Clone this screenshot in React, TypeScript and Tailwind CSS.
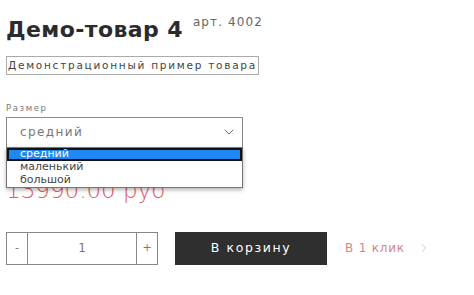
import { ChevronDown, ChevronRight } from 'lucide-react'

const SIZES = ['средний', 'маленький', 'большой']

export default function App() {
  return (
    <div className="w-[474px] h-[295px] bg-white overflow-hidden font-['DejaVu_Sans',sans-serif] text-[#333]">
      <div className="px-[6px] pt-[19px]">
        {/* Title */}
        <div className="flex items-start">
          <h1 className="text-[22px] leading-none font-bold tracking-[0.4px] text-[#2b2b2b]">Демо-товар 4</h1>
          <span className="ml-[10px] -mt-[3px] text-[12px] leading-none tracking-[1.1px] text-[#666]">арт. 4002</span>
        </div>

        <div className="mt-[15px] inline-block border border-[#aaa] px-[1px] py-[3px] text-[10.5px] leading-none tracking-[1.75px] text-[#444]">
          Демонстрационный пример товара
        </div>

        {/* Size select */}
        <div className="mt-[28px] text-[8.5px] leading-none tracking-[1.6px] text-[#777]">Размер</div>
        <div className="relative mt-[4px] w-[237px]">
          <div className="h-[31px] border border-[#888] flex items-center pl-[13px] pr-[5px]">
            <span className="text-[12px] tracking-[1.4px] text-[#777]">средний</span>
            <ChevronDown size={16} strokeWidth={1.3} className="ml-auto text-[#555]" />
          </div>
          <div className="absolute left-0 top-[30px] w-[237px] bg-white border border-[#777] shadow-[0_2px_4px_rgba(0,0,0,0.3)] z-10 text-[11px]">
            {SIZES.map((s, i) => (
              <div
                key={s}
                className={
                  i === 0
                    ? 'h-[13px] leading-[8px] bg-[#1e88f5] text-white border-2 border-[#111] pl-[11px]'
                    : 'h-[13px] leading-[12px] text-[#444] pl-[13px]'
                }
              >
                {s}
              </div>
            ))}
          </div>
        </div>

        {/* Price */}
        <div className="mt-[27px] text-[23px] leading-[30px] font-light tracking-[0px] text-[#e4585f]">13990.00 руб</div>

        {/* Actions */}
        <div className="mt-[27px] flex items-center">
          <div className="flex h-[33px] w-[152px] border border-[#888] text-[#777] text-[11px]">
            <div className="w-[21px] flex items-center justify-center border-r border-[#888]">-</div>
            <div className="flex-1 flex items-center justify-center text-[12px]">1</div>
            <div className="w-[21px] flex items-center justify-center border-l border-[#888]">+</div>
          </div>
          <button className="ml-[17px] h-[33px] w-[152px] bg-[#2f2f2f] text-white text-[12.5px] tracking-[1.6px]">
            В корзину
          </button>
          <div className="ml-[18px] flex items-center text-[12px] tracking-[0.8px] text-[#d9808c]">
            В 1 клик
            <ChevronRight size={14} strokeWidth={1.3} className="ml-[12px] text-[#e0a8b0]" />
          </div>
        </div>
      </div>
    </div>
  )
}
